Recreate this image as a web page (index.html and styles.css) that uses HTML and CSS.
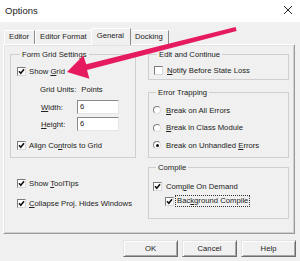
FILE: index.html
```html
<!DOCTYPE html>
<html>
<head>
<meta charset="utf-8">
<link rel="stylesheet" href="styles.css">
</head>
<body>
<div class="dialog">
  <div class="titlebar">
    <span class="title">Options</span>
    <svg class="close" width="10" height="10" viewBox="0 0 10 10"><path d="M1 1 L9 9 M9 1 L1 9" stroke="#222" stroke-width="1" fill="none"/></svg>
  </div>
  <div class="main">
    <div class="tabs">
      <div class="tab">Editor</div>
      <div class="tab">Editor Format</div>
      <div class="tab active">General</div>
      <div class="tab">Docking</div>
    </div>
    <div class="panel">
      <div class="col col-left">
        <fieldset class="group grid-group">
          <legend>Form Grid Settings</legend>
          <div class="row"><span class="box"><svg viewBox="0 0 7 7"><path d="M1 3.2 L2.8 5.2 L6 1.2" /></svg></span><span>Show <u>G</u>rid</span></div>
          <div class="units"><span class="lbl">Grid Units:</span><span>Points</span></div>
          <div class="field field-w"><span class="lbl"><u>W</u>idth:</span><span class="input">6</span></div>
          <div class="field field-h"><span class="lbl"><u>H</u>eight:</span><span class="input">6</span></div>
          <div class="row align-row"><span class="box"><svg viewBox="0 0 7 7"><path d="M1 3.2 L2.8 5.2 L6 1.2" /></svg></span><span>Align Co<u>n</u>trols to Grid</span></div>
        </fieldset>
        <div class="row loose tips"><span class="box"><svg viewBox="0 0 7 7"><path d="M1 3.2 L2.8 5.2 L6 1.2" /></svg></span><span>Show <u>T</u>oolTips</span></div>
        <div class="row loose collapse"><span class="box"><svg viewBox="0 0 7 7"><path d="M1 3.2 L2.8 5.2 L6 1.2" /></svg></span><span><u>C</u>ollapse Proj. Hides Windows</span></div>
      </div>
      <div class="col col-right">
        <fieldset class="group edit-group">
          <legend>Edit and Continue</legend>
          <div class="row"><span class="box"></span><span><u>N</u>otify Before State Loss</span></div>
        </fieldset>
        <fieldset class="group error-group">
          <legend>Error Trapping</legend>
          <div class="row"><span class="radio"></span><span><u>B</u>reak on All Errors</span></div>
          <div class="row"><span class="radio"></span><span><u>B</u>reak in Class Module</span></div>
          <div class="row"><span class="radio on"></span><span>Break on Unhandled <u>E</u>rrors</span></div>
        </fieldset>
        <fieldset class="group compile-group">
          <legend>Compile</legend>
          <div class="row"><span class="box"><svg viewBox="0 0 7 7"><path d="M1 3.2 L2.8 5.2 L6 1.2" /></svg></span><span>Com<u>p</u>ile On Demand</span></div>
          <div class="row sub"><span class="box"><svg viewBox="0 0 7 7"><path d="M1 3.2 L2.8 5.2 L6 1.2" /></svg></span><span class="focus">Bac<u>k</u>ground Compile</span></div>
        </fieldset>
      </div>
    </div>
    <div class="buttons">
      <div class="btn">OK</div>
      <div class="btn">Cancel</div>
      <div class="btn">Help</div>
    </div>
  </div>
  <svg class="arrow" width="300" height="261" viewBox="0 0 300 261">
    <polygon points="67,72 83.4,55.5 86.2,64.2 235.6,27.1 236.6,30.9 87.0,70.0 89.4,78.7" fill="#e61a5f"/>
  </svg>
</div>
</body>
</html>
```
FILE: styles.css
```css
* { box-sizing: border-box; }
html, body { margin: 0; padding: 0; }
body {
  width: 300px;
  height: 261px;
  overflow: hidden;
  background: #f0f0f0;
  font-family: "Liberation Sans", Arial, sans-serif;
  font-size: 7.7px;
  color: #222;
}
.dialog {
  position: relative;
  width: 300px;
  height: 261px;
  background: #f0f0f0;
}
.titlebar {
  height: 22px;
  background: #fff;
  display: flex;
  align-items: center;
  justify-content: space-between;
  padding: 0 7px 2px 5px;
}
.title { font-size: 9.5px; color: #222; }
.close { display: block; }

.main { padding: 6px 0 0 3px; }

.tabs {
  display: flex;
  align-items: flex-end;
  height: 16px;
  padding-left: 1px;
}
.tab {
  height: 14px;
  line-height: 12px;
  padding: 0 5px 0 4px;
  border-top: 1px solid #fff;
  border-left: 1px solid #fff;
  border-right: 1px solid #8c8c8c;
  white-space: nowrap;
}
.tab.active {
  height: 17px;
  line-height: 14px;
  margin: 0 -1px -1px -2px;
  padding: 0 6px 0 5px;
  background: #f0f0f0;
  position: relative;
  z-index: 1;
}

.panel {
  width: 292px;
  height: 190px;
  border: 1px solid;
  border-color: #fff #9a9a9a #9a9a9a #fff;
  box-shadow: inset 1px 1px 0 #e3e3e3, inset -1px -1px 0 #d0d0d0;
  display: flex;
  gap: 12px;
  padding: 0 5px 0 6px;
}
.col { display: flex; flex-direction: column; }
.col-left { width: 126px; }
.col-right { width: 141px; }

.group {
  margin: 0;
  padding: 0;
  border: 1px solid #cfcfcf;
  min-inline-size: 0;
  display: flex;
  flex-direction: column;
}
.group legend {
  padding: 0 2px;
  margin-left: 3px;
  line-height: 9px;
  height: 9px;
}

.row {
  display: flex;
  align-items: center;
  height: 10px;
  gap: 3px;
  white-space: nowrap;
}
.box {
  width: 9px;
  height: 9px;
  flex: none;
  background: #fff;
  border: 1px solid;
  border-color: #7c7c7c #d8d8d8 #d8d8d8 #7c7c7c;
  display: flex;
  align-items: center;
  justify-content: center;
}
.box svg { width: 7px; height: 7px; display: block; }
.box path { fill: none; stroke: #111; stroke-width: 1.6; }
.radio {
  width: 8px;
  height: 8px;
  flex: none;
  border-radius: 50%;
  background: #fff;
  border: 1px solid;
  border-color: #808080 #dedede #dedede #808080;
  display: flex;
  align-items: center;
  justify-content: center;
}
.radio.on::after {
  content: "";
  width: 3px;
  height: 3px;
  border-radius: 50%;
  background: #111;
}

.grid-group { margin-top: 5px; padding: 7px 0 7px 6px; }
.units { display: flex; height: 10px; line-height: 10px; margin-top: 9px; padding-left: 23px; }
.units .lbl { margin-right: 5px; }
.field { display: flex; align-items: center; height: 14px; padding-left: 24px; }
.field .lbl { width: 36px; }
.field-w { margin-top: 5px; }
.field-h { margin-top: 3px; }
.input {
  width: 42px;
  height: 14px;
  background: #fff;
  border: 1px solid;
  border-color: #8a8a8a #e6e6e6 #e6e6e6 #8a8a8a;
  padding-left: 2px;
  line-height: 12px;
}
.align-row { margin-top: 9px; }
.loose { padding-left: 7px; }
.tips { margin-top: 20px; }
.collapse { margin-top: 10px; }

.col-right .row { gap: 4px; }
.edit-group { margin-top: 5px; padding: 6px 0 4px 5px; }
.error-group { margin-top: 8px; padding: 8px 0 7px 4px; gap: 7.5px; }
.error-group .row { gap: 5px; }
.compile-group { margin-top: 5px; padding: 9px 0 11px 4px; }
.row.sub { margin-top: 4px; height: 12px; padding-left: 12px; gap: 1px; }
.focus {
  border: 1px dotted #333;
  padding: 0 1px 0 1px;
  line-height: 10px;
}

.buttons {
  display: flex;
  justify-content: flex-end;
  gap: 4px;
  margin-top: 6px;
  padding-right: 4px;
}
.btn {
  width: 55px;
  height: 17px;
  border: 1px solid;
  border-color: #e3e3e3 #6d6d6d #6d6d6d #e3e3e3;
  box-shadow: inset 1px 1px 0 #fff, inset -1px -1px 0 #a8a8a8;
  background: #f0f0f0;
  display: flex;
  align-items: center;
  justify-content: center;
}

.arrow {
  position: absolute;
  left: 0;
  top: 0;
  pointer-events: none;
}
```
